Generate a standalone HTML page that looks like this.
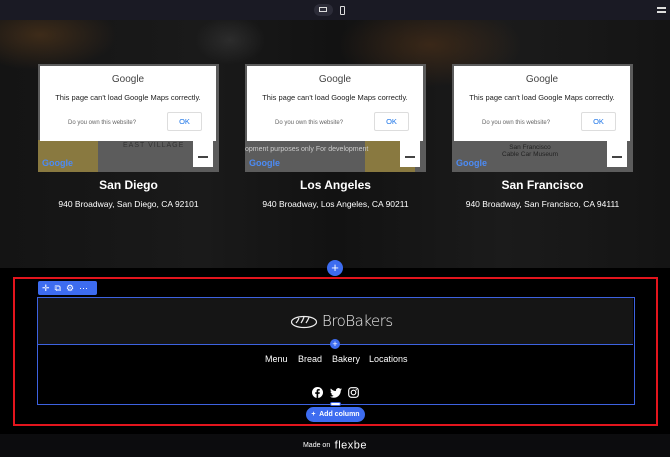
<!DOCTYPE html>
<html><head><meta charset="utf-8"><style>
*{margin:0;padding:0;box-sizing:border-box}
body{width:670px;height:457px;overflow:hidden;background:#000;font-family:"Liberation Sans",Arial,sans-serif;position:relative}
.top{position:absolute;left:0;top:0;width:670px;height:20px;background:#1a1a24}
.hero{position:absolute;left:0;top:20px;width:670px;height:248px;
background:
radial-gradient(ellipse 110px 50px at 40px 15px,rgba(110,70,30,.45),transparent 70%),
radial-gradient(ellipse 130px 60px at 430px 25px,rgba(100,60,25,.45),transparent 70%),
radial-gradient(ellipse 50px 35px at 230px 20px,rgba(90,90,90,.3),transparent 70%),
linear-gradient(90deg,#141414,#1a1a1a 30%,#121212 50%,#1b1b1b 75%,#141414)}
.card{position:absolute;top:64px;width:181px;height:108px;background:#5c5c5c}
.card .y1{position:absolute;left:0;top:76px;width:60px;height:32px;background:#9c8634;opacity:.7}
.dlg{position:absolute;left:2px;top:2px;width:176px;height:75px;background:#fff;text-align:center}
.dlg .g{font-size:10px;color:#444;margin-top:8px}
.dlg .m{font-size:7.5px;color:#222;margin-top:8px}
.dlg .q{position:absolute;left:28px;top:54px;font-size:6px;color:#666}
.dlg .ok{position:absolute;left:127px;top:46px;width:35px;height:19px;border:1px solid #ddd;border-radius:2px;color:#1a73e8;font-size:7.5px;line-height:17px}
.zm{position:absolute;left:155px;top:77px;width:20px;height:26px;background:#fff}
.zm:after{content:"";position:absolute;left:5px;top:15px;width:10px;height:2px;background:#444}
.gl{position:absolute;left:4px;top:94px;font-size:9px;font-weight:bold;color:#4c8bf5}
.t{position:absolute;width:181px;text-align:center;color:#fff}
.t1{top:178px;font-size:12px;font-weight:bold}
.t2{top:199px;font-size:8.5px}
.plus{position:absolute;width:16px;height:16px;border-radius:50%;background:#3d6cf0;color:#fff;font-size:13px;line-height:15px;text-align:center}
.red{position:absolute;left:13px;top:277px;width:645px;height:149px;border:2px solid #e3151d}
.blue{position:absolute;left:37px;top:297px;width:598px;height:108px;border:1.5px solid #3d62e0}
.hdr{position:absolute;left:0;top:0;width:595px;height:47px;background:#151515;border-bottom:1.5px solid #3d62e0}
.tool{position:absolute;left:38px;top:281px;width:59px;height:14px;background:#3d6cf0;border-radius:2px;color:#fff;font-size:9px;line-height:14px;letter-spacing:5px;padding-left:4px}
.nav{position:absolute;top:354px;font-size:9px;color:#fff}
.addc{position:absolute;left:306px;top:407px;width:59px;height:15px;border-radius:8px;background:#3d6cf0;color:#fff;font-size:7px;line-height:15px;text-align:center;font-weight:bold}
.foot{position:absolute;left:0;top:434px;width:670px;height:23px;background:#0c0c0e;color:#fff;text-align:center}
</style></head><body>
<div class="top">
 <div style="position:absolute;left:314px;top:4px;width:19px;height:12px;border-radius:6px;background:#2c2c38"></div>
 <div style="position:absolute;left:319px;top:7px;width:8px;height:5px;border:1.5px solid #ddd"></div>
 <div style="position:absolute;left:340px;top:6px;width:5px;height:9px;border:1.5px solid #ddd;border-radius:1px"></div>
 <div style="position:absolute;left:657px;top:7px;width:9px;height:1.5px;background:#ddd"></div>
 <div style="position:absolute;left:657px;top:11px;width:9px;height:1.5px;background:#ddd"></div>
</div>
<div class="hero"></div>
<div class="card" style="left:38px"><div class="y1"></div><div style="position:absolute;left:85px;top:78px;font-size:7px;color:#333;letter-spacing:1px">EAST VILLAGE</div><div class="dlg"><div class="g">Google</div><div class="m">This page can't load Google Maps correctly.</div><div class="q">Do you own this website?</div><div class="ok">OK</div></div><div class="zm"></div><div class="gl">Google</div></div>
<div class="card" style="left:245px"><div class="y1" style="left:120px;width:50px"></div><div style="position:absolute;left:0;top:82px;font-size:7px;color:#ccc;white-space:nowrap">opment purposes only For development</div><div class="dlg"><div class="g">Google</div><div class="m">This page can't load Google Maps correctly.</div><div class="q">Do you own this website?</div><div class="ok">OK</div></div><div class="zm"></div><div class="gl">Google</div></div>
<div class="card" style="left:452px"><div style="position:absolute;left:50px;top:80px;font-size:6.5px;color:#222;line-height:7px;text-align:center">San Francisco<br>Cable Car Museum</div><div class="dlg"><div class="g">Google</div><div class="m">This page can't load Google Maps correctly.</div><div class="q">Do you own this website?</div><div class="ok">OK</div></div><div class="zm"></div><div class="gl">Google</div></div>
<div class="t t1" style="left:38px">San Diego</div><div class="t t2" style="left:28px;width:201px">940 Broadway, San Diego, CA 92101</div>
<div class="t t1" style="left:245px">Los Angeles</div><div class="t t2" style="left:235px;width:201px">940 Broadway, Los Angeles, CA 90211</div>
<div class="t t1" style="left:452px">San Francisco</div><div class="t t2" style="left:442px;width:201px">940 Broadway, San Francisco, CA 94111</div>
<div class="plus" style="left:327px;top:260px">+</div>
<div class="red"></div>
<div class="tool">✛⧉⚙⋯</div>
<div class="blue"><div class="hdr">
 <svg style="position:absolute;left:252px;top:17px" width="28" height="14" viewBox="0 0 28 14"><ellipse cx="14" cy="7" rx="12.5" ry="5.5" fill="none" stroke="#eee" stroke-width="1.2"/><path d="M9 3 Q8 6 6 8 M14 2 Q13 5 11 8 M19 2.5 Q18 5 16 8" stroke="#eee" stroke-width="1.2" fill="none"/></svg>
 <div style="position:absolute;left:284px;top:14px;font-size:15px;color:#eee;font-family:'DejaVu Sans',sans-serif;font-weight:200;letter-spacing:-0.5px">BroBakers</div>
</div></div>
<div class="plus" style="left:330px;top:339px;width:10px;height:10px;font-size:9px;line-height:10px">+</div>
<div class="nav" style="left:265px">Menu</div><div class="nav" style="left:298px">Bread</div><div class="nav" style="left:332px">Bakery</div><div class="nav" style="left:369px">Locations</div>
<svg style="position:absolute;left:312px;top:387px" width="11" height="11" viewBox="0 0 24 24"><circle cx="12" cy="12" r="12" fill="#fff"/><path d="M13.5 24v-9h3l.5-3.5h-3.5V9.3c0-1 .3-1.7 1.8-1.7H17V4.5c-.4 0-1.5-.2-2.7-.2-2.7 0-4.3 1.6-4.3 4.5v2.7H7V15h3v9z" fill="#000"/></svg>
<svg style="position:absolute;left:330px;top:388px" width="12" height="10" viewBox="0 0 24 20"><path d="M24 2.4c-.9.4-1.8.7-2.8.8 1-.6 1.8-1.6 2.2-2.7-1 .6-2 1-3.1 1.2A4.9 4.9 0 0 0 11.9 6 14 14 0 0 1 1.7.9a4.9 4.9 0 0 0 1.5 6.6c-.8 0-1.600-.3-2.200-.6 0 2.4 1.7 4.4 3.9 4.8-.7.2-1.5.2-2.2.1.6 2 2.4 3.4 4.6 3.4A9.9 9.9 0 0 1 0 17.3 14 14 0 0 0 7.5 19.5c9.1 0 14-7.5 14-14v-.6c1-.7 1.8-1.6 2.5-2.5z" fill="#fff"/></svg>
<svg style="position:absolute;left:348px;top:387px" width="11" height="11" viewBox="0 0 24 24"><rect x="1.5" y="1.5" width="21" height="21" rx="6" fill="none" stroke="#fff" stroke-width="2.5"/><circle cx="12" cy="12" r="5" fill="none" stroke="#fff" stroke-width="2.5"/><circle cx="18" cy="6" r="1.5" fill="#fff"/></svg>
<div style="position:absolute;left:330px;top:402px;width:11px;height:4px;border-radius:2px;background:#fff;border:1px solid #3d62e0"></div>
<div class="addc">+&nbsp; Add column</div>
<div class="foot"><span style="font-size:7px;vertical-align:middle;line-height:23px">Made on</span> <span style="font-size:11px;vertical-align:middle;letter-spacing:.5px">flexbe</span></div>
</body></html>
